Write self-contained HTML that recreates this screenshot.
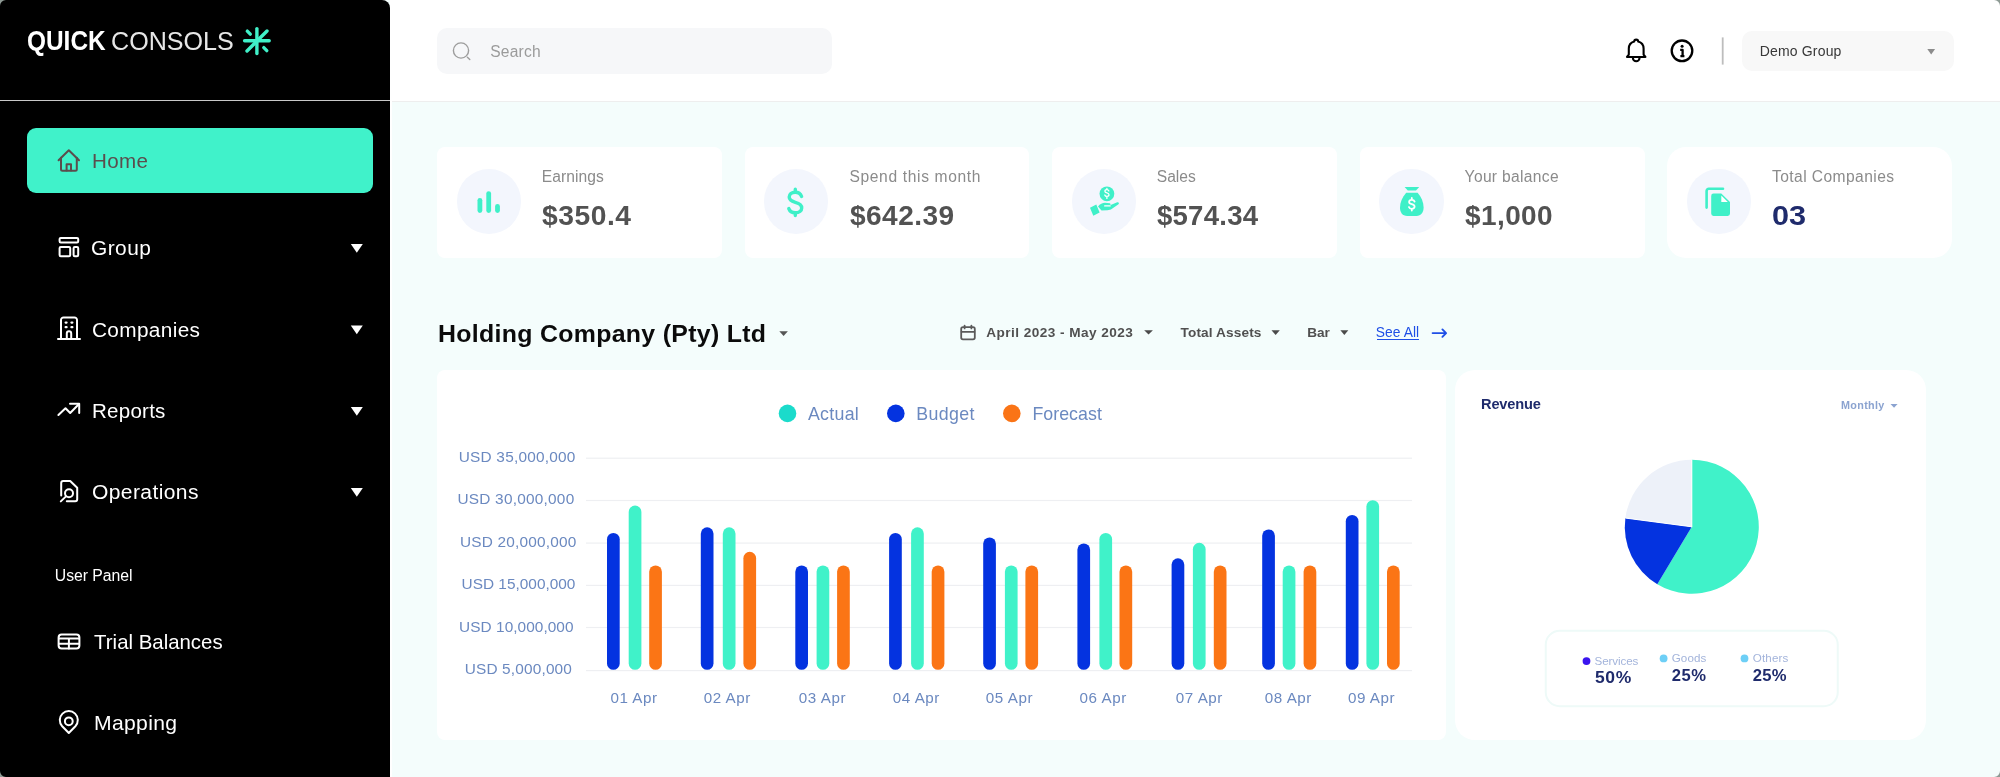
<!DOCTYPE html>
<html><head><meta charset="utf-8"><title>Quick Consols Dashboard</title>
<style>
html,body{margin:0;padding:0;}
body{width:2000px;height:777px;position:relative;overflow:hidden;font-family:"Liberation Sans",sans-serif;background:#f4fdfc;}
.t{position:absolute;white-space:nowrap;line-height:1;transform:translateZ(0);}
svg{overflow:visible}
</style></head><body>
<div style="position:absolute;left:0;top:0;width:2000px;height:777px;background:#f4fdfc"></div>
<div style="position:absolute;left:390px;top:0;width:1610px;height:101px;background:#fff"></div>
<div style="position:absolute;left:392px;top:101px;width:1608px;height:1px;background:#eeeeee"></div>
<div style="position:absolute;left:390px;top:101px;width:2px;height:676px;background:#fff"></div>
<div style="position:absolute;left:0;top:0;width:390px;height:777px;background:#000;border-top-right-radius:8px"></div>
<div style="position:absolute;left:0;top:99.6px;width:390px;height:1.3px;background:#c9c9c9"></div>
<div class="t" style="left:27.00px;top:27.94px;font-size:27px;font-weight:700;color:#fff;letter-spacing:0.000px;transform:translateZ(0) scaleX(0.9041);transform-origin:0 0;">QUICK</div>
<div class="t" style="left:110.90px;top:28.37px;font-size:26.5px;font-weight:400;color:#e6e6e6;letter-spacing:0.000px;transform:translateZ(0) scaleX(0.9476);transform-origin:0 0;">CONSOLS</div>
<svg style="position:absolute;left:0;top:0" width="400" height="100"><g stroke="#40f0c8" stroke-width="3.4" stroke-linecap="round">
<line x1="256.9" y1="28.6" x2="256.9" y2="53.6"/>
<line x1="244.6" y1="40.8" x2="269.2" y2="40.8"/>
<line x1="247" y1="51" x2="267" y2="31"/>
<line x1="247.3" y1="31.1" x2="250.3" y2="34.1"/>
<line x1="263.8" y1="47.6" x2="266.8" y2="50.6"/>
</g></svg>
<div style="position:absolute;left:27.4px;top:128px;width:345.6px;height:64.5px;background:#40f2ca;border-radius:9px"></div>
<svg style="position:absolute;left:0;top:0" width="390" height="777"><g stroke="#5b4d4d" stroke-width="2" fill="none" stroke-linecap="round" stroke-linejoin="round">
<path d="M58.6 160.2 L68.8 150.2 L79 160.2"/>
<path d="M61 157.8 V169.3 a1.5 1.5 0 0 0 1.5 1.5 H75.3 a1.5 1.5 0 0 0 1.5 -1.5 V157.8"/>
<path d="M66.6 170.5 V164.3 H71 V170.5"/>
</g>
<g stroke="#fff" stroke-width="2" fill="none" stroke-linecap="round" stroke-linejoin="round">
<rect x="59.6" y="237.9" width="18.6" height="4.6" rx="1.2"/>
<rect x="59.6" y="247" width="10.6" height="9.2" rx="1.2"/>
<rect x="73.6" y="247" width="4.6" height="9.2" rx="1.2"/>
<path d="M61 338.5 V320 a2.6 2.6 0 0 1 2.6 -2.6 H74.4 a2.6 2.6 0 0 1 2.6 2.6 V338.5"/>
<path d="M58 338.9 H80"/>
<path d="M66.8 338.5 V333.4 a2.2 2.2 0 0 1 4.4 0 V338.5"/>
<path d="M65.6 322.6 H66.6 M71.4 322.6 H72.4 M65.6 327.2 H66.6 M71.4 327.2 H72.4" stroke-width="2.2"/>
<path d="M58.4 415 L65.5 408.2 L70.2 413 L79 404"/>
<path d="M70 403.8 H79.2 V413"/>
<path d="M61.2 495.5 V483 a2 2 0 0 1 2 -2 H70.2 L77.2 487.8 V499.2 a2 2 0 0 1 -2 2 H66.8"/>
<circle cx="69" cy="493.2" r="4"/>
<path d="M66 496.4 L60.8 501.4"/>
<rect x="58.6" y="634.4" width="20.8" height="14.2" rx="3"/>
<path d="M59 638.5 H79 M59 643.8 H79 M68.9 638.5 V648.5"/>
<path d="M68.8 733 L62.2 726.2 A9 9 0 1 1 75.4 726.2 Z"/>
<circle cx="68.8" cy="721.3" r="3.9"/>
</g>
<g fill="#fff">
<path d="M350.8 244 H362.8 L356.8 252.8 Z"/>
<path d="M350.8 325.5 H362.8 L356.8 334.3 Z"/>
<path d="M350.8 407 H362.8 L356.8 415.8 Z"/>
<path d="M350.8 488 H362.8 L356.8 496.8 Z"/>
</g></svg>
<div class="t" style="left:91.90px;top:151.07px;font-size:20px;font-weight:400;color:#5b4d4d;letter-spacing:0.347px;transform:translateZ(0) scaleX(1.0292);transform-origin:0 0;">Home</div>
<div class="t" style="left:91.30px;top:238.27px;font-size:20px;font-weight:400;color:#fff;letter-spacing:0.420px;transform:translateZ(0) scaleX(1.0453);transform-origin:0 0;">Group</div>
<div class="t" style="left:91.90px;top:319.87px;font-size:20px;font-weight:400;color:#fff;letter-spacing:0.335px;transform:translateZ(0) scaleX(1.0397);transform-origin:0 0;">Companies</div>
<div class="t" style="left:91.90px;top:401.37px;font-size:20px;font-weight:400;color:#fff;letter-spacing:0.220px;transform:translateZ(0) scaleX(1.0283);transform-origin:0 0;">Reports</div>
<div class="t" style="left:91.90px;top:482.37px;font-size:20px;font-weight:400;color:#fff;letter-spacing:0.373px;transform:translateZ(0) scaleX(1.0515);transform-origin:0 0;">Operations</div>
<div class="t" style="left:54.80px;top:568.13px;font-size:15.8px;font-weight:400;color:#fff;letter-spacing:-0.059px;">User Panel</div>
<div class="t" style="left:94.10px;top:631.83px;font-size:20.4px;font-weight:400;color:#fff;letter-spacing:0.006px;">Trial Balances</div>
<div class="t" style="left:93.80px;top:713.43px;font-size:20.4px;font-weight:400;color:#fff;letter-spacing:0.318px;transform:translateZ(0) scaleX(1.0366);transform-origin:0 0;">Mapping</div>
<div style="position:absolute;left:437.4px;top:28px;width:394.4px;height:46px;background:#f6f7f9;border-radius:10px"></div>
<svg style="position:absolute;left:0;top:0" width="2000" height="100">
<circle cx="461" cy="50.5" r="7.6" fill="none" stroke="#9d9d9d" stroke-width="1.4"/>
<path d="M467.4 57.3 L469.8 59.6" stroke="#9d9d9d" stroke-width="1.4" stroke-linecap="round"/>
<g fill="none" stroke="#000" stroke-width="2.1" stroke-linejoin="round" stroke-linecap="round">
<path d="M1627 57 H1645.4 L1643.6 54.6 V48.6 A7.4 7.4 0 0 0 1638.2 41.6 A2 2 0 0 0 1634.2 41.6 A7.4 7.4 0 0 0 1628.8 48.6 V54.6 Z"/>
<path d="M1632.9 58 A3.3 3.3 0 0 0 1639.5 58"/>
<circle cx="1682" cy="50.8" r="10.3" stroke-width="2.3"/>
</g>
<circle cx="1682.1" cy="46.3" r="1.5" fill="#000"/>
<path d="M1680.2 49.9 H1682.6 V56.2 M1680.4 56.2 H1684.4" fill="none" stroke="#000" stroke-width="2.3" stroke-linejoin="round"/>
<rect x="1721.8" y="37.4" width="1.8" height="27.2" fill="#bdbdbd"/>
<path d="M1927.3 49 H1935.1 L1931.2 54.6 Z" fill="#8c8c8c"/>
</svg>
<div class="t" style="left:490.20px;top:43.99px;font-size:15.6px;font-weight:400;color:#9b9b9b;letter-spacing:0.210px;">Search</div>
<div style="position:absolute;left:1742.1px;top:30.9px;width:211.9px;height:39.7px;background:#f8f8f8;border-radius:10px"></div>
<svg style="position:absolute;left:1900px;top:40px" width="50" height="20"><path d="M27.3 9 H35.1 L31.2 14.6 Z" fill="#8c8c8c"/></svg>
<div class="t" style="left:1759.70px;top:44.05px;font-size:14px;font-weight:400;color:#383838;letter-spacing:0.172px;">Demo Group</div>
<div style="position:absolute;left:437.2px;top:146.8px;width:284.5px;height:111px;background:#fff;border-radius:8px"></div>
<div style="position:absolute;left:456.5px;top:169.4px;width:64.4px;height:64.4px;background:#f3f6fd;border-radius:50%"></div>
<div class="t" style="left:541.80px;top:168.99px;font-size:15.6px;font-weight:400;color:#8b8b8b;letter-spacing:0.065px;">Earnings</div>
<div class="t" style="left:542.20px;top:202.74px;font-size:27px;font-weight:700;color:#525252;letter-spacing:0.502px;transform:translateZ(0) scaleX(1.0456);transform-origin:0 0;">$350.4</div>
<div style="position:absolute;left:744.8px;top:146.8px;width:284.5px;height:111px;background:#fff;border-radius:8px"></div>
<div style="position:absolute;left:764.1px;top:169.4px;width:64.4px;height:64.4px;background:#f3f6fd;border-radius:50%"></div>
<div class="t" style="left:849.40px;top:168.99px;font-size:15.6px;font-weight:400;color:#8b8b8b;letter-spacing:0.650px;">Spend this month</div>
<div class="t" style="left:849.80px;top:202.74px;font-size:27px;font-weight:700;color:#525252;letter-spacing:0.426px;transform:translateZ(0) scaleX(1.0393);transform-origin:0 0;">$642.39</div>
<div style="position:absolute;left:1052.2px;top:146.8px;width:284.5px;height:111px;background:#fff;border-radius:8px"></div>
<div style="position:absolute;left:1071.5px;top:169.4px;width:64.4px;height:64.4px;background:#f3f6fd;border-radius:50%"></div>
<div class="t" style="left:1156.80px;top:168.99px;font-size:15.6px;font-weight:400;color:#8b8b8b;letter-spacing:0.000px;">Sales</div>
<div class="t" style="left:1157.20px;top:202.74px;font-size:27px;font-weight:700;color:#525252;letter-spacing:0.226px;transform:translateZ(0) scaleX(1.0209);transform-origin:0 0;">$574.34</div>
<div style="position:absolute;left:1360.0px;top:146.8px;width:284.5px;height:111px;background:#fff;border-radius:8px"></div>
<div style="position:absolute;left:1379.3px;top:169.4px;width:64.4px;height:64.4px;background:#f3f6fd;border-radius:50%"></div>
<div class="t" style="left:1464.60px;top:168.99px;font-size:15.6px;font-weight:400;color:#8b8b8b;letter-spacing:0.320px;">Your balance</div>
<div class="t" style="left:1465.00px;top:202.74px;font-size:27px;font-weight:700;color:#525252;letter-spacing:0.398px;transform:translateZ(0) scaleX(1.0362);transform-origin:0 0;">$1,000</div>
<div style="position:absolute;left:1667.4px;top:146.8px;width:284.5px;height:111px;background:#fff;border-radius:19px"></div>
<div style="position:absolute;left:1686.7px;top:169.4px;width:64.4px;height:64.4px;background:#f3f6fd;border-radius:50%"></div>
<div class="t" style="left:1772.00px;top:168.99px;font-size:15.6px;font-weight:400;color:#8b8b8b;letter-spacing:0.420px;">Total Companies</div>
<div class="t" style="left:1772.40px;top:202.74px;font-size:27px;font-weight:700;color:#1f2b6c;letter-spacing:0.000px;transform:translateZ(0) scaleX(1.1345);transform-origin:0 0;">03</div>
<svg style="position:absolute;left:0;top:0" width="2000" height="300">
<g fill="#3ff0c8">
<rect x="477.5" y="197.9" width="4.8" height="15" rx="2.4"/>
<rect x="486.3" y="191.2" width="4.8" height="21.7" rx="2.4"/>
<rect x="495.1" y="203.9" width="4.8" height="9" rx="2.4"/>
</g>
<g fill="none" stroke="#3ff0c8" stroke-width="3.4" stroke-linecap="round" stroke-linejoin="round">
<path d="M801.6 196.5 C800.5 193.5 798.3 192.2 795.3 192.2 C791.5 192.2 789.2 194.3 789.2 197.1 C789.2 200 791.5 201.3 795.3 202.3 C799.4 203.3 801.7 204.8 801.7 207.9 C801.7 210.8 799.2 212.7 795.3 212.7 C792 212.7 789.7 211.2 788.8 208.6"/>
<path d="M795.3 189.2 V192 M795.3 212.9 V215.6"/>
</g>
<circle cx="1106.9" cy="193.8" r="7.4" fill="#3ff0c8"/>
<path d="M1108.9 191 C1108.5 190 1107.8 189.6 1106.9 189.6 C1105.7 189.6 1104.9 190.3 1104.9 191.2 C1104.9 192.2 1105.7 192.6 1106.9 192.9 C1108.2 193.2 1109 193.8 1109 194.8 C1109 195.8 1108.1 196.4 1106.9 196.4 C1105.9 196.4 1105.1 196 1104.8 195 M1106.9 188.4 V189.6 M1106.9 196.4 V198.4" fill="none" stroke="#fff" stroke-width="1.3" stroke-linecap="round"/>
<path d="M1090 207.7 L1096.3 204.4 L1099.6 212.4 L1093.3 215.7 Z" fill="#3ff0c8"/>
<path d="M1098 206.6 C1100 204 1102.5 202.8 1105 202.8 L1109.8 203.3 C1110.8 203.5 1110.8 205.4 1109.8 205.4 L1104.8 205.5 L1109.5 205.5 L1117.2 202.3 C1118.6 201.8 1119.6 203.2 1118.5 204.2 L1112 208.8 C1110.6 209.8 1109.3 210.2 1107.5 210.2 L1101.5 210.5 Z" fill="#3ff0c8"/>
<path d="M1104.6 205.9 H1110.2" stroke="#fff" stroke-width="1.1" stroke-linecap="round"/>
<path d="M1404.6 187 H1419.2 L1416 190.6 H1407.8 Z" fill="#3ff0c8"/>
<path d="M1406.2 192.7 H1417.6 C1421.2 197 1423.6 201.8 1423.6 207.5 C1423.6 212.5 1421 215.9 1416.5 215.9 H1407.2 C1402.6 215.9 1400 212.5 1400 207.5 C1400 201.8 1402.6 197 1406.2 192.7 Z" fill="#3ff0c8"/>
<path d="M1414.6 201.6 C1414.2 200.4 1413.3 199.8 1411.8 199.8 C1410.1 199.8 1409.1 200.7 1409.1 201.9 C1409.1 203.2 1410.1 203.7 1411.8 204.1 C1413.6 204.5 1414.6 205.2 1414.6 206.6 C1414.6 207.9 1413.4 208.8 1411.8 208.8 C1410.4 208.8 1409.3 208.2 1408.9 207 M1411.8 197.9 V199.8 M1411.8 208.8 V210.6" fill="none" stroke="#fff" stroke-width="1.8" stroke-linecap="round"/>
<path d="M1706.6 207.6 V191 a2.2 2.2 0 0 1 2.2 -2.2 H1723" fill="none" stroke="#3ff0c8" stroke-width="2.6" stroke-linecap="round"/>
<path d="M1713.5 193.6 H1721.3 L1730 202 V213.6 a2.3 2.3 0 0 1 -2.3 2.3 H1713.5 a2.3 2.3 0 0 1 -2.3 -2.3 V195.9 a2.3 2.3 0 0 1 2.3 -2.3 Z" fill="#3ff0c8"/>
<path d="M1721.3 195.5 V202 H1727.8 Z" fill="#fff"/>
</svg>
<div class="t" style="left:438.00px;top:321.58px;font-size:24px;font-weight:700;color:#0b0b0b;letter-spacing:0.307px;transform:translateZ(0) scaleX(1.0358);transform-origin:0 0;">Holding Company (Pty) Ltd</div>
<svg style="position:absolute;left:0;top:300px" width="2000" height="60">
<path d="M779.3 31.2 H787.9 L783.6 36.1 Z" fill="#555"/>
<g fill="none" stroke="#5a5a5a" stroke-width="1.8" stroke-linecap="round" stroke-linejoin="round">
<rect x="961.2" y="27.2" width="13.6" height="12.2" rx="1.8"/>
<path d="M961.6 31.8 H974.4 M964.6 25.6 V28.4 M971.4 25.6 V28.4"/>
</g>
<path d="M1144.2 30.2 H1152.9 L1148.55 34.6 Z" fill="#4a4a4a"/>
<path d="M1271.5 30.2 H1279.8 L1275.65 35 Z" fill="#4a4a4a"/>
<path d="M1340.4 30.2 H1348.3 L1344.35 35 Z" fill="#4a4a4a"/>
<path d="M1432.6 33.1 H1446 M1442.4 29.4 L1446.1 33.1 L1442.4 36.8" fill="none" stroke="#1f4fe6" stroke-width="1.9" stroke-linecap="round" stroke-linejoin="round"/>
</svg>
<div class="t" style="left:986.20px;top:326.09px;font-size:13.6px;font-weight:700;color:#505050;letter-spacing:0.457px;">April 2023 - May 2023</div>
<div class="t" style="left:1180.50px;top:326.09px;font-size:13.6px;font-weight:700;color:#505050;letter-spacing:0.140px;">Total Assets</div>
<div class="t" style="left:1307.20px;top:326.09px;font-size:13.6px;font-weight:700;color:#505050;letter-spacing:-0.006px;">Bar</div>
<div class="t" style="left:1375.80px;top:325.92px;font-size:13.8px;font-weight:400;color:#1f4fe6;letter-spacing:0.052px;">See All</div>
<div style="position:absolute;left:1376.6px;top:339px;width:42.1px;height:1.3px;background:#1f4fe6"></div>
<div style="position:absolute;left:436.8px;top:370px;width:1009.2px;height:369.8px;background:#fff;border-radius:8px"></div>
<div style="position:absolute;left:1455.1px;top:370.2px;width:471.3px;height:369.6px;background:#fff;border-radius:20px"></div>
<svg style="position:absolute;left:0;top:0" width="2000" height="777">
<rect x="586" y="457.6" width="826" height="1.2" fill="#eeeff2"/>
<rect x="586" y="499.9" width="826" height="1.2" fill="#eeeff2"/>
<rect x="586" y="542.5" width="826" height="1.2" fill="#eeeff2"/>
<rect x="586" y="584.8" width="826" height="1.2" fill="#eeeff2"/>
<rect x="586" y="626.9" width="826" height="1.2" fill="#eeeff2"/>
<rect x="586" y="670.0" width="826" height="1.2" fill="#eeeff2"/>
<rect x="607" y="533" width="12.7" height="136.8" rx="6.35" fill="#0433e0"/>
<rect x="628.7" y="505.6" width="12.7" height="164.2" rx="6.35" fill="#40f2c9"/>
<rect x="649.2" y="565.5" width="12.7" height="104.3" rx="6.35" fill="#fb7515"/>
<rect x="700.8" y="527.3" width="12.7" height="142.5" rx="6.35" fill="#0433e0"/>
<rect x="722.8" y="527.3" width="12.7" height="142.5" rx="6.35" fill="#40f2c9"/>
<rect x="743.4" y="551.8" width="12.7" height="118.0" rx="6.35" fill="#fb7515"/>
<rect x="795.3" y="565.5" width="12.7" height="104.3" rx="6.35" fill="#0433e0"/>
<rect x="816.6" y="565.5" width="12.7" height="104.3" rx="6.35" fill="#40f2c9"/>
<rect x="837.1" y="565.5" width="12.7" height="104.3" rx="6.35" fill="#fb7515"/>
<rect x="889.1" y="533" width="12.7" height="136.8" rx="6.35" fill="#0433e0"/>
<rect x="911.1" y="527.3" width="12.7" height="142.5" rx="6.35" fill="#40f2c9"/>
<rect x="931.7" y="565.5" width="12.7" height="104.3" rx="6.35" fill="#fb7515"/>
<rect x="983.2" y="537.4" width="12.7" height="132.4" rx="6.35" fill="#0433e0"/>
<rect x="1004.9" y="565.5" width="12.7" height="104.3" rx="6.35" fill="#40f2c9"/>
<rect x="1025.4" y="565.5" width="12.7" height="104.3" rx="6.35" fill="#fb7515"/>
<rect x="1077.4" y="543.5" width="12.7" height="126.3" rx="6.35" fill="#0433e0"/>
<rect x="1099.4" y="533" width="12.7" height="136.8" rx="6.35" fill="#40f2c9"/>
<rect x="1119.5" y="565.5" width="12.7" height="104.3" rx="6.35" fill="#fb7515"/>
<rect x="1171.6" y="558.3" width="12.7" height="111.5" rx="6.35" fill="#0433e0"/>
<rect x="1192.9" y="542.8" width="12.7" height="127.0" rx="6.35" fill="#40f2c9"/>
<rect x="1213.8" y="565.5" width="12.7" height="104.3" rx="6.35" fill="#fb7515"/>
<rect x="1262.2" y="529.4" width="12.7" height="140.4" rx="6.35" fill="#0433e0"/>
<rect x="1282.7" y="565.5" width="12.7" height="104.3" rx="6.35" fill="#40f2c9"/>
<rect x="1303.6" y="565.5" width="12.7" height="104.3" rx="6.35" fill="#fb7515"/>
<rect x="1345.8" y="515" width="12.7" height="154.8" rx="6.35" fill="#0433e0"/>
<rect x="1366.4" y="500.2" width="12.7" height="169.6" rx="6.35" fill="#40f2c9"/>
<rect x="1387" y="565.5" width="12.7" height="104.3" rx="6.35" fill="#fb7515"/>
<circle cx="787.5" cy="413.4" r="8.8" fill="#1bdbcb"/>
<circle cx="895.8" cy="413.4" r="8.8" fill="#0433e0"/>
<circle cx="1011.8" cy="413.4" r="8.8" fill="#fa7416"/>
<path d="M1691.8 526.8 L1691.80 459.80 A67 67 0 1 1 1657.29 584.23 Z" fill="#40f2c9"/>
<path d="M1691.8 526.8 L1657.29 584.23 A67 67 0 0 1 1625.37 518.05 Z" fill="#0433e0"/>
<path d="M1691.8 526.8 L1625.37 518.05 A67 67 0 0 1 1691.80 459.80 Z" fill="#edf1f9"/>
<path d="M1691.8 527.3 V459.79999999999995 M1691.8 526.8 L1625.37 518.05" stroke="#fff" stroke-width="1" fill="none"/>
<path d="M1890.5 404 H1897.6 L1894.05 407.8 Z" fill="#8ba3d0"/>
<rect x="1545.75" y="630.75" width="292" height="75.5" rx="14" fill="#fff" stroke="#eefaf8" stroke-width="2"/>
<circle cx="1586.5" cy="661.1" r="3.9" fill="#3a14ef"/>
<circle cx="1663.6" cy="658.4" r="3.9" fill="#6dcff6"/>
<circle cx="1744.5" cy="658.4" r="3.9" fill="#6dcff6"/>
</svg>
<div class="t" style="left:808.00px;top:406.23px;font-size:17.8px;font-weight:400;color:#6b89c0;letter-spacing:0.263px;">Actual</div>
<div class="t" style="left:916.20px;top:406.23px;font-size:17.8px;font-weight:400;color:#6b89c0;letter-spacing:0.355px;">Budget</div>
<div class="t" style="left:1032.40px;top:406.23px;font-size:17.8px;font-weight:400;color:#6b89c0;letter-spacing:0.037px;">Forecast</div>
<div class="t" style="left:458.70px;top:448.86px;font-size:15.4px;font-weight:400;color:#6b89c0;letter-spacing:0.224px;">USD 35,000,000</div>
<div class="t" style="left:457.40px;top:491.26px;font-size:15.4px;font-weight:400;color:#6b89c0;letter-spacing:0.232px;">USD 30,000,000</div>
<div class="t" style="left:459.90px;top:533.56px;font-size:15.4px;font-weight:400;color:#6b89c0;letter-spacing:0.209px;">USD 20,000,000</div>
<div class="t" style="left:461.60px;top:576.26px;font-size:15.4px;font-weight:400;color:#6b89c0;letter-spacing:0.001px;">USD 15,000,000</div>
<div class="t" style="left:459.10px;top:618.66px;font-size:15.4px;font-weight:400;color:#6b89c0;letter-spacing:0.047px;">USD 10,000,000</div>
<div class="t" style="left:464.70px;top:660.76px;font-size:15.4px;font-weight:400;color:#6b89c0;letter-spacing:0.164px;">USD 5,000,000</div>
<div class="t" style="left:610.45px;top:690.33px;font-size:15.2px;font-weight:400;color:#6b89c0;letter-spacing:0.554px;">01 Apr</div>
<div class="t" style="left:703.65px;top:690.33px;font-size:15.2px;font-weight:400;color:#6b89c0;letter-spacing:0.554px;">02 Apr</div>
<div class="t" style="left:798.85px;top:690.33px;font-size:15.2px;font-weight:400;color:#6b89c0;letter-spacing:0.554px;">03 Apr</div>
<div class="t" style="left:892.75px;top:690.33px;font-size:15.2px;font-weight:400;color:#6b89c0;letter-spacing:0.554px;">04 Apr</div>
<div class="t" style="left:985.85px;top:690.33px;font-size:15.2px;font-weight:400;color:#6b89c0;letter-spacing:0.554px;">05 Apr</div>
<div class="t" style="left:1079.55px;top:690.33px;font-size:15.2px;font-weight:400;color:#6b89c0;letter-spacing:0.554px;">06 Apr</div>
<div class="t" style="left:1175.75px;top:690.33px;font-size:15.2px;font-weight:400;color:#6b89c0;letter-spacing:0.554px;">07 Apr</div>
<div class="t" style="left:1264.75px;top:690.33px;font-size:15.2px;font-weight:400;color:#6b89c0;letter-spacing:0.554px;">08 Apr</div>
<div class="t" style="left:1347.95px;top:690.33px;font-size:15.2px;font-weight:400;color:#6b89c0;letter-spacing:0.554px;">09 Apr</div>
<div class="t" style="left:1481.00px;top:397.24px;font-size:14.6px;font-weight:700;color:#1f2b6c;letter-spacing:-0.164px;">Revenue</div>
<div class="t" style="left:1841.00px;top:399.66px;font-size:10.8px;font-weight:700;color:#8ba3d0;letter-spacing:0.330px;">Monthly</div>
<div class="t" style="left:1594.60px;top:655.48px;font-size:11.6px;font-weight:400;color:#a3b4db;letter-spacing:-0.098px;">Services</div>
<div class="t" style="left:1595.00px;top:669.85px;font-size:16.6px;font-weight:700;color:#1f2b6c;letter-spacing:0.600px;transform:translateZ(0) scaleX(1.0542);transform-origin:0 0;">50%</div>
<div class="t" style="left:1671.80px;top:651.98px;font-size:11.6px;font-weight:400;color:#a3b4db;letter-spacing:0.060px;">Goods</div>
<div class="t" style="left:1671.80px;top:667.65px;font-size:16.6px;font-weight:700;color:#1f2b6c;letter-spacing:0.450px;">25%</div>
<div class="t" style="left:1752.70px;top:651.98px;font-size:11.6px;font-weight:400;color:#a3b4db;letter-spacing:0.180px;">Others</div>
<div class="t" style="left:1752.70px;top:667.65px;font-size:16.6px;font-weight:700;color:#1f2b6c;letter-spacing:0.250px;">25%</div>
<svg style="position:absolute;left:0;top:0" width="2000" height="777">
<path d="M0 0 H6 A6 6 0 0 0 0 6 Z" fill="#8e9a94"/>
<path d="M2000 0 H1994 A6 6 0 0 1 2000 6 Z" fill="#8e9a94"/>
<path d="M0 777 H6 A6 6 0 0 1 0 771 Z" fill="#8e9a94"/>
<path d="M2000 777 H1994 A6 6 0 0 0 2000 771 Z" fill="#8e9a94"/>
</svg>
</body></html>
